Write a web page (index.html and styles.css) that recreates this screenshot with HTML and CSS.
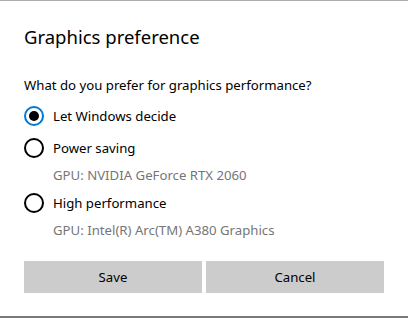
FILE: index.html
```html
<!DOCTYPE html>
<html lang="en">
  <head>
    <meta charset="UTF-8" />
    <meta name="viewport" content="width=device-width, initial-scale=1.0" />
    <title>Graphics preference</title>
    <link rel="stylesheet" href="styles.css">
  </head>
  <body>
    <div class="dialog">
      <h1 class="title">Graphics preference</h1>

      <p class="question">What do you prefer for graphics performance?</p>

      <div class="options">
        <label class="option">
          <input type="radio" name="gpu" checked>
          <span class="radio"></span>
          <span class="label">Let Windows decide</span>
        </label>

        <label class="option">
          <input type="radio" name="gpu">
          <span class="radio"></span>
          <span class="label">Power saving</span>
        </label>
        <div class="gpu">GPU: NVIDIA GeForce RTX 2060</div>

        <label class="option">
          <input type="radio" name="gpu">
          <span class="radio"></span>
          <span class="label">High performance</span>
        </label>
        <div class="gpu">GPU: Intel(R) Arc(TM) A380 Graphics</div>
      </div>

      <div class="buttons">
        <button class="btn">Save</button>
        <button class="btn">Cancel</button>
      </div>
    </div>
  </body>
</html>
```

FILE: styles.css
```css
/* Base */
html, body {
  margin: 0;
  height: 100%;
}

body {
  font-family: "Noto Sans", "Open Sans", sans-serif;
  color: #000;
  background: #fff;
}

/* Dialog frame */
.dialog {
  box-sizing: border-box;
  height: 318px;
  border-top: 1px solid #acacac;
  border-bottom: 2px solid #7a7a7a;
  padding: 0 24px;
  display: flex;
  flex-direction: column;
}

.title {
  margin: 22px 0 0;
  font-size: 18.5px;
  font-weight: 400;
  line-height: 28px;
}

.question {
  margin: 24px 0 0;
  font-size: 13.2px;
  line-height: 20px;
}

/* Radio list */
.options {
  margin-top: 11px;
  display: flex;
  flex-direction: column;
}

.option {
  display: flex;
  align-items: center;
  gap: 9px;
  height: 20px;
  font-size: 13.2px;
  cursor: pointer;
}

.option + .option {
  margin-top: 12px;
}

.gpu + .option {
  margin-top: 8px;
}

.option input {
  display: none;
}

.radio {
  flex: none;
  box-sizing: border-box;
  width: 20px;
  height: 20px;
  border: 2px solid #000;
  border-radius: 50%;
  display: flex;
  align-items: center;
  justify-content: center;
}

.option input:checked + .radio {
  border-color: #0078d7;
}

.option input:checked + .radio::after {
  content: "";
  width: 10px;
  height: 10px;
  border-radius: 50%;
  background: #000;
}

.gpu {
  margin: 7px 0 0 29px;
  font-size: 13.2px;
  line-height: 20px;
  color: #767676;
}

/* Buttons */
.buttons {
  margin-top: 21px;
  display: flex;
  gap: 4px;
}

.btn {
  flex: 1;
  height: 32px;
  border: none;
  background: #cccccc;
  font-family: inherit;
  font-size: 13.2px;
  color: #000;
}
```
